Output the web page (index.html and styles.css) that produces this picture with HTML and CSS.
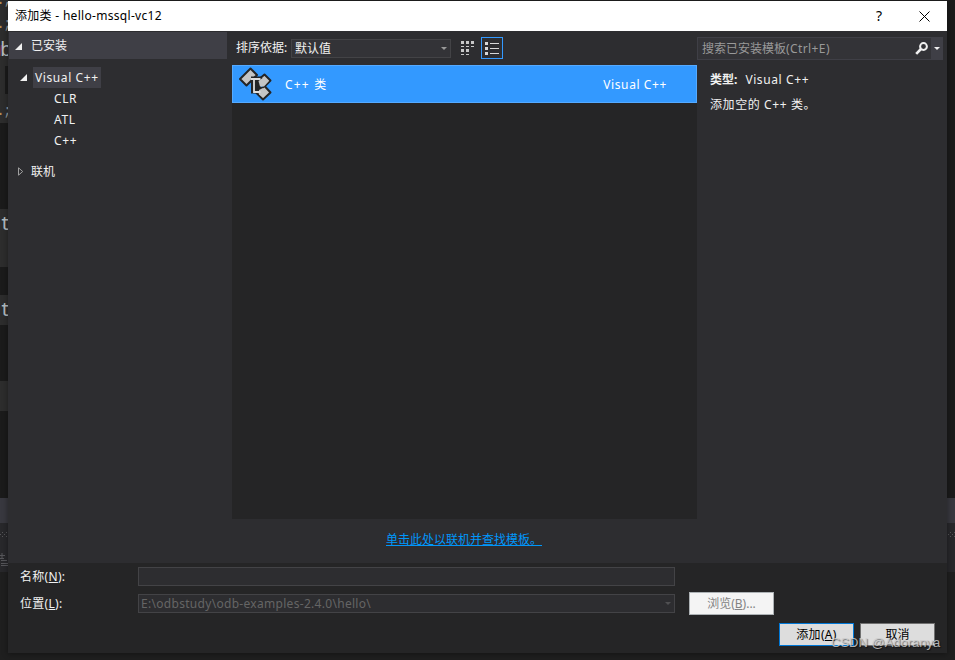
FILE: index.html
```html
<!DOCTYPE html>
<html lang="zh-CN">
<head>
    <meta charset="UTF-8">
    <title>添加类 - hello-mssql-vc12</title>
    <link rel="stylesheet" href="styles.css">
</head>
<body>
<div class="desktop">

    <!-- editor showing on the left of the dialog -->
    <div class="editor-left">
        <div class="band code" style="height: 123px">
            <span class="code-bit" style="top: -9px"><b>.</b>;</span>
            <span class="code-bit" style="top: 15px"><b>.</b>;</span>
            <span class="code-bit big" style="top: 39px"><i>u</i>b</span>
            <span class="code-block"></span>
            <span class="code-bit" style="top: 102px"><b>.</b>;</span>
        </div>
        <div class="band" style="height: 86px"></div>
        <div class="band code" style="height: 58px"><span class="code-bit big" style="top: 4px"><b>.</b>t</span></div>
        <div class="band" style="height: 28px"></div>
        <div class="band code" style="height: 30px"><span class="code-bit big" style="top: 4px"><b>.</b>t</span></div>
        <div class="band" style="height: 56px"></div>
        <div class="band code" style="height: 30px"></div>
        <div class="band" style="height: 87px"></div>
        <div class="band bar" style="height: 25px"></div>
        <div class="band panel" style="height: 49px">
            <svg width="8" height="49" viewBox="0 0 8 49">
                <path d="M0 11.500h1M4 11.500h1M2 9.500h1M6 9.500h1M2 13.500h1M6 13.500h1" stroke="#555558"/>
                <path d="M0 32.500h5M2 30v5M0 35.500h4M1 37.500h6M1 40.500h7M1 42.500h7" stroke="#56565a"/>
            </svg>
        </div>
        <div class="band base"></div>
    </div>

    <div class="dialog">
        <div class="titlebar">
            <span class="title">添加类 - hello-mssql-vc12</span>
            <span class="help">?</span>
            <svg class="close" width="11" height="11" viewBox="0 0 11 11">
                <path d="M.5 .5l10 10M10.500 .5l-10 10" stroke="#000" fill="none"/>
            </svg>
        </div>

        <div class="main">
            <div class="sidebar">
                <div class="installed">
                    <svg width="7" height="7" viewBox="0 0 7 7"><path d="M7 0v7H0z" fill="#f1f1f1"/></svg>
                    <span>已安装</span>
                </div>
                <div class="node root">
                    <svg width="7" height="7" viewBox="0 0 7 7"><path d="M7 0v7H0z" fill="#f1f1f1"/></svg>
                    <span class="picked latin">Visual C++</span>
                </div>
                <div class="leaf latin">CLR</div>
                <div class="leaf latin">ATL</div>
                <div class="leaf latin">C++</div>
                <div class="node online">
                    <svg width="6" height="9" viewBox="0 0 6 9"><path d="M.5 .8v7.400L4.700 4.500z" fill="none" stroke="#a0a0a0"/></svg>
                    <span>联机</span>
                </div>
            </div>

            <div class="templates">
                <div class="toolbar">
                    <span class="sort-label">排序依据:</span>
                    <div class="sort">
                        <span>默认值</span>
                        <svg width="6" height="3" viewBox="0 0 6 3"><path d="M0 0h6L3 3z" fill="#999"/></svg>
                    </div>
                    <svg class="small-icons" width="13" height="14" viewBox="0 0 13 14" fill="#c8c8c8">
                        <path d="M0 0h3v3H0zM5 0h3v3H5zM10 0h3v3h-3zM0 5h3v1H0zM5 5h3v1H5zM10 5h3v1h-3zM0 8h3v3H0zM5 8h3v3H5zM0 13h3v1H0zM5 13h3v1H5z"/>
                    </svg>
                    <div class="list-icons">
                        <svg width="14" height="13" viewBox="0 0 14 13" fill="#d8d8d8">
                            <path d="M0 0h3v3H0zM0 5h3v3H0zM0 10h3v3H0zM5 1h9v1H5zM5 6h9v1H5zM5 11h9v1H5z"/>
                        </svg>
                    </div>
                </div>
                <div class="list">
                    <div class="item">
                        <svg width="34" height="34" viewBox="0 0 34 34">
                            <g fill="#c5c5c5" stroke="#252526" stroke-width="2" stroke-linejoin="round">
                                <path d="M11.500 1.500L18 8 7.500 18.500 1 12z"/>
                                <path d="M25.500 7.500L31.500 13.500 26 19 19 13z"/>
                                <path d="M25.500 19L31.500 25.500 24 32.500 17.500 26z"/>
                            </g>
                            <path d="M12 9.500h10l4 4-5 5 5 5v3H12z" fill="#252526"/>
                            <path d="M19.500 14l5.500-4 5 4-5 5.500h-4z" fill="#c5c5c5"/>
                            <path d="M20 23l4-2 5 4.500-5 5-4-3z" fill="#c5c5c5"/>
                            <path d="M15 12v13h6.500M12 12h9.500" fill="none" stroke="#dedede" stroke-width="1.800"/>
                        </svg>
                        <span class="item-name latin">C++ 类</span>
                        <span class="item-lang latin">Visual C++</span>
                    </div>
                </div>
                <div class="online-link"><a href="#">单击此处以联机并查找模板。</a></div>
            </div>

            <div class="details">
                <div class="search">
                    <span>搜索已安装模板<span class="key">(Ctrl+E)</span></span>
                    <svg width="13" height="13" viewBox="0 0 13 13">
                        <circle cx="8.500" cy="4.500" r="3.400" fill="none" stroke="#f1f1f1" stroke-width="2"/>
                        <path d="M6 7L1.200 11.800" stroke="#f1f1f1" stroke-width="2.600"/>
                    </svg>
                    <div class="search-drop">
                        <svg width="6" height="3" viewBox="0 0 6 3"><path d="M0 0h6L3 3z" fill="#f1f1f1"/></svg>
                    </div>
                </div>
                <p class="type"><b>类型:</b><span class="latin">Visual C++</span></p>
                <p class="about latin">添加空的 C++ 类。</p>
            </div>
        </div>

        <div class="footer">
            <div class="row">
                <label>名称(<u>N</u>):</label>
                <div class="field"></div>
            </div>
            <div class="row location">
                <label>位置(<u>L</u>):</label>
                <div class="field">
                    <span class="path">E:\odbstudy\odb-examples-2.4.0\hello\</span>
                    <svg width="6" height="3" viewBox="0 0 6 3"><path d="M0 0h6L3 3z" fill="#505052"/></svg>
                </div>
                <button class="browse" disabled>浏览(<u>B</u>)...</button>
            </div>
            <div class="buttons">
                <button class="add">添加(<u>A</u>)</button>
                <button>取消</button>
            </div>
        </div>
    </div>

    <div class="editor-right">
        <div class="band" style="height: 498px"></div>
        <div class="band bar" style="height: 25px"></div>
        <div class="band panel" style="height: 49px">
            <svg width="8" height="49" viewBox="0 0 8 49">
                <path d="M1 11.500h1M5 11.500h1M3 9.500h1M7 9.500h1M3 13.500h1M7 13.500h1" stroke="#555558"/>
            </svg>
        </div>
        <div class="band base"></div>
    </div>

    <div class="watermark">CSDN @Adoranya</div>
</div>
</body>
</html>
```

FILE: styles.css
```css
* {
    box-sizing: border-box;
}

body {
    margin: 0;
    background: #1f1f1f;
    color: #f1f1f1;
    font-family: "Noto Sans", "Noto Sans CJK SC", sans-serif;
    font-size: 12px;
    line-height: 16px;
    overflow: hidden;
}

svg {
    display: block;
    flex: none;
}

p {
    margin: 0;
}

.desktop {
    display: grid;
    grid-template-columns: 8px 939px 8px;
    position: relative;
    width: 955px;
    height: 660px;
    white-space: nowrap;
}

/* Editor behind */
.editor-left,
.editor-right {
    display: flex;
    flex-direction: column;
    overflow: hidden;
}

.band {
    flex: none;
    position: relative;
    background: #1b1b1b;
    overflow: hidden;
}

.band.code {
    background: #2d2d2d;
}

.band.bar {
    background: #38383f;
}

.band.panel {
    background: #28282b;
}

.band.base {
    flex: 1;
    background: #1f1f1f;
}

.code-bit {
    position: absolute;
    right: -2px;
    color: #8f9a9f;
    font: 15px/20px "Liberation Mono", monospace;
    letter-spacing: -2px;
}

.code-bit.big {
    right: -1px;
    color: #b4bcbe;
    font-size: 20px;
    line-height: 24px;
    letter-spacing: -3px;
}

.code-bit i {
    color: #703040;
}

.code-bit b {
    color: #b59055;
    font-weight: normal;
}

.code-block {
    position: absolute;
    top: 66px;
    left: 5px;
    width: 3px;
    height: 28px;
    background: #1b1b1b;
}

/* Dialog */
.dialog {
    display: flex;
    flex-direction: column;
    height: 652px;
    margin-top: 1px;
    background: #2d2d30;
    box-shadow: 0 1px 6px rgba(0, 0, 0, .4);
    z-index: 1;
}

.titlebar {
    display: flex;
    align-items: center;
    height: 30px;
    padding: 0 17px 0 7px;
    background: #fff;
    color: #000;
}

.title {
    flex: 1;
    letter-spacing: .3px;
}

.help {
    margin-right: 37px;
    font-size: 14px;
}

.main {
    display: grid;
    grid-template-columns: 224px 465px 250px;
    height: 532px;
}

.latin {
    letter-spacing: .6px;
}

/* Tree */
.installed {
    display: flex;
    align-items: center;
    gap: 9px;
    width: 218px;
    height: 27px;
    margin: 1px 0 8px 1px;
    padding: 1px 0 0 6px;
    background: #3f3f46;
}

.node {
    display: flex;
    align-items: center;
    gap: 6px;
    height: 21px;
    padding-left: 12px;
}

.picked {
    height: 21px;
    padding: 3px 2px 2px;
    background: #3f3f46;
}

.leaf {
    height: 21px;
    padding: 3px 0 0 46px;
}

.online {
    gap: 7px;
    margin-top: 10px;
    padding-left: 10px;
}

/* Template list */
.toolbar {
    display: flex;
    align-items: center;
    height: 34px;
    padding-left: 4px;
}

.sort-label {
    width: 55px;
}

.sort {
    display: flex;
    align-items: center;
    justify-content: space-between;
    width: 160px;
    height: 19px;
    margin-top: 1px;
    padding: 0 3px;
    border: 1px solid #434346;
    background: #333337;
}

.small-icons {
    margin-left: 10px;
}

.list-icons {
    display: flex;
    align-items: center;
    justify-content: center;
    width: 22px;
    height: 22px;
    margin-left: 7px;
    border: 1px solid #3399ff;
}

.list {
    height: 454px;
    background: #252526;
}

.item {
    display: flex;
    align-items: center;
    height: 38px;
    padding-left: 6px;
    border: 1px solid #55aaff;
    background: #3399ff;
    color: #fff;
}

.item-name {
    flex: 1;
    margin-left: 12px;
    padding-top: 2px;
    letter-spacing: 1.2px;
}

.item-lang {
    margin-right: 29px;
    padding-top: 2px;
}

.online-link {
    padding-top: 13px;
    padding-right: 1px;
    text-align: center;
}

.online-link a {
    color: #0097fb;
}

/* Search and details */
.search {
    display: flex;
    align-items: center;
    justify-content: space-between;
    width: 246px;
    height: 23px;
    margin: 6px 0 12px;
    padding-left: 4px;
    border: 1px solid #3f3f46;
    background: #333337;
    color: #999;
}

.search > span {
    flex: 1;
}

.key {
    letter-spacing: .4px;
}

.search-drop {
    display: flex;
    align-items: center;
    justify-content: center;
    width: 11px;
    height: 21px;
    margin-left: 3px;
    background: #3f3f46;
}

.type {
    display: flex;
    gap: 8px;
    padding-left: 13px;
}

.about {
    margin-top: 9px;
    padding-left: 13px;
}

/* Footer */
.footer {
    height: 90px;
    padding-top: 4px;
    background: #252526;
}

.row {
    display: flex;
    align-items: center;
    height: 19px;
    padding-left: 12px;
}

.row label {
    width: 118px;
    letter-spacing: .3px;
}

.field {
    display: flex;
    align-items: center;
    justify-content: space-between;
    width: 537px;
    height: 19px;
    padding: 0 3px 0 2px;
    border: 1px solid #434346;
    background: #2d2d30;
    color: #656565;
}

.path {
    letter-spacing: .3px;
}

.location {
    height: 23px;
    margin-top: 6px;
}

button {
    width: 75px;
    height: 23px;
    padding: 0;
    border: 1px solid #707070;
    background: #ddd;
    color: #000;
    font: inherit;
}

.browse {
    width: 85px;
    margin-left: 14px;
    border-color: #adb2b5;
    background: #f4f4f4;
    color: #838383;
}

.add {
    border-color: #0078d7;
    letter-spacing: .3px;
}

.buttons {
    display: flex;
    justify-content: flex-end;
    gap: 6px;
    margin-top: 8px;
    padding-right: 12px;
}

.watermark {
    position: absolute;
    left: 831px;
    top: 635px;
    z-index: 2;
    color: rgba(205, 205, 205, .85);
    text-shadow: 1px 1px 1px rgba(0, 0, 0, .5);
    font: 13px/16px "Liberation Sans", sans-serif;
}
```
